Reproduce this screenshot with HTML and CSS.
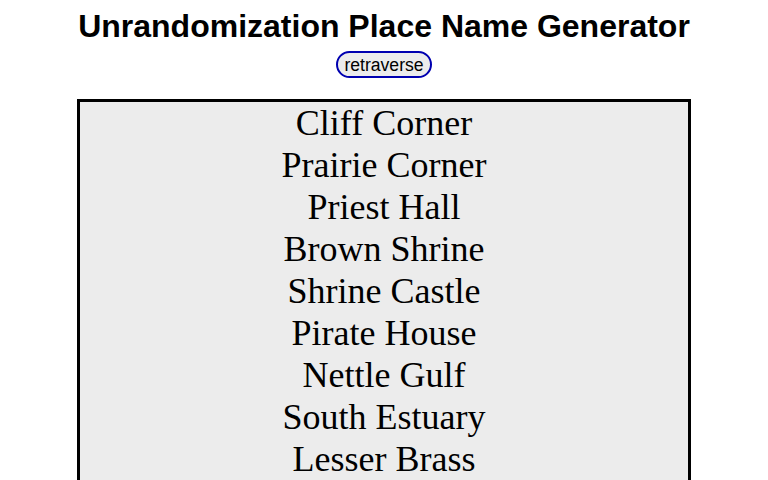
FILE: index.html
```html
<!DOCTYPE html>
<html>
<head>
<meta charset="utf-8">
<title>Unrandomization Place Name Generator</title>
<link rel="stylesheet" href="styles.css">
</head>
<body>
<h1 class="title">Unrandomization Place Name Generator</h1>
<div class="controls"><button class="retraverse">retraverse</button></div>
<div class="names">
<div class="name">Cliff Corner</div>
<div class="name">Prairie Corner</div>
<div class="name">Priest Hall</div>
<div class="name">Brown Shrine</div>
<div class="name">Shrine Castle</div>
<div class="name">Pirate House</div>
<div class="name">Nettle Gulf</div>
<div class="name">South Estuary</div>
<div class="name">Lesser Brass</div>
</div>
</body>
</html>
```
FILE: styles.css
```css
html, body {
  background: #ffffff;
}
body {
  margin: 8px;
  font-family: "Liberation Sans", Arial, sans-serif;
  color: #000;
}
.title {
  margin: 0 0 6px;
  font-size: 32px;
  font-weight: bold;
  text-align: center;
}
.controls {
  display: flex;
  justify-content: center;
}
.retraverse {
  font-family: "Liberation Sans", Arial, sans-serif;
  font-size: 17.6px;
  color: #000;
  background: #ececec;
  border: 2px solid #0000b0;
  border-radius: 14px;
  padding: 1px 6px;
  height: 27px;
  line-height: 20px;
}
.names {
  width: 80vw;
  box-sizing: border-box;
  margin: 21px auto 0;
  border: 3px solid #000;
  background: #ececec;
  font-family: "Liberation Serif", "Times New Roman", serif;
  font-size: 36px;
  line-height: 42px;
  text-align: center;
}
```
